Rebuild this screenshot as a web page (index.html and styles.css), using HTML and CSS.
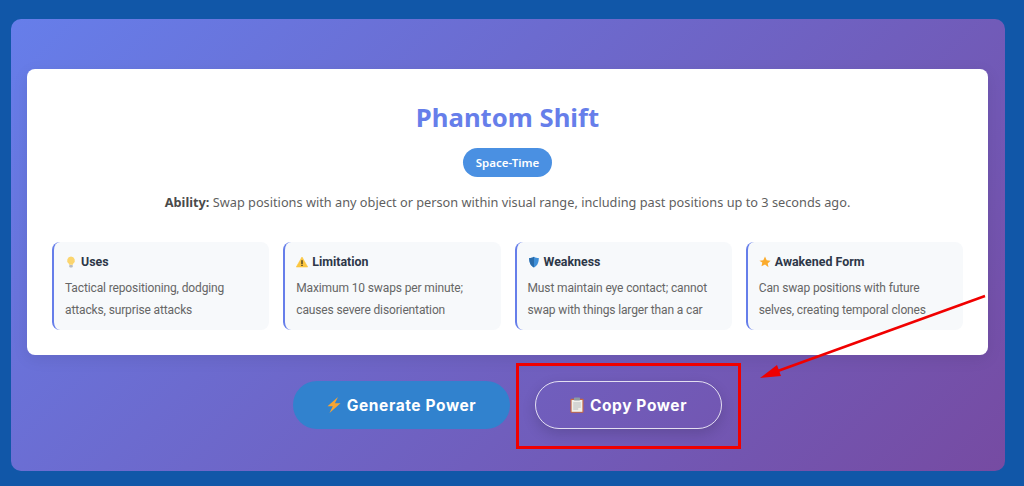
FILE: index.html
```html
<!DOCTYPE html>
<html lang="en">
<head>
<meta charset="utf-8">
<title>Phantom Shift</title>
<link rel="stylesheet" href="styles.css">
</head>
<body>
<main class="panel">
  <section class="power">
    <h1 class="name">Phantom Shift</h1>
    <span class="badge">Space-Time</span>
    <p class="ability"><strong>Ability:</strong> Swap positions with any object or person within visual range, including past positions up to 3 seconds ago.</p>
    <div class="details">
      <article class="detail">
        <h2><svg class="ico" viewBox="0 0 12 12"><path d="M6 .5a3.900 3.900 0 0 0-2.300 7l.4 1.300h3.800l.4-1.300A3.900 3.900 0 0 0 6 .5z" fill="#fbd56e"/><rect x="4.200" y="9" width="3.600" height="2.400" rx=".8" fill="#b9bcc0"/></svg>Uses</h2>
        <p>Tactical repositioning, dodging attacks, surprise attacks</p>
      </article>
      <article class="detail">
        <h2><svg class="ico" viewBox="0 0 12 12"><path d="M6 1 .3 11h11.400z" fill="#fcc63f" stroke="#fcc63f" stroke-linejoin="round" stroke-width=".6"/><rect x="5.400" y="4.200" width="1.200" height="3.900" fill="#2a2a22"/><rect x="5.400" y="8.800" width="1.200" height="1.200" fill="#2a2a22"/></svg>Limitation</h2>
        <p>Maximum 10 swaps per minute; causes severe disorientation</p>
      </article>
      <article class="detail">
        <h2><svg class="ico" viewBox="0 0 12 12"><path d="M6 .8c1.600 1 3 1.300 4.800 1.300 0 4.600-1.300 7.800-4.800 9.300C2.500 9.900 1.200 6.700 1.200 2.100 3 2.100 4.400 1.800 6 .8z" fill="#3f8fd8"/><path d="M6 .8v10.600C2.500 9.900 1.200 6.700 1.200 2.100 3 2.100 4.400 1.800 6 .8z" fill="#2a6cab"/></svg>Weakness</h2>
        <p>Must maintain eye contact; cannot swap with things larger than a car</p>
      </article>
      <article class="detail">
        <h2><svg class="ico" viewBox="0 0 12 12"><path d="m6 .6 1.700 3.600 3.900.5-2.900 2.700.8 3.900L6 8.400l-3.500 1.900.8-3.900L.4 4.700l3.900-.5z" fill="#fbab2c"/></svg>Awakened Form</h2>
        <p>Can swap positions with future selves, creating temporal clones</p>
      </article>
    </div>
  </section>
  <div class="actions">
    <button class="btn btn-primary"><svg class="btn-ico" viewBox="0 0 16 16"><path d="M12 0 1.500 9.300h5.300L3.500 16 14.500 6.300H8.900z" fill="#f6a534"/></svg>Generate Power</button>
    <button class="btn btn-outline"><svg class="btn-ico" viewBox="0 0 16 16"><rect x="1.500" y="1.800" width="13" height="14" rx=".8" fill="#c9683f"/><rect x="2.600" y="3" width="10.800" height="11.800" fill="#f1f0ea"/><rect x="5" y=".4" width="6" height="3" rx=".6" fill="#8d9aa3"/><path d="M4.200 6h7.600M4.200 8h7.600M4.200 10h7.600M4.200 12h5" stroke="#a9adb0" stroke-width=".8"/></svg>Copy Power</button>
  </div>
</main>
<div class="mark-box"></div>
<svg class="mark-arrow" viewBox="0 0 1024 486"><path d="M985 296 775 372" stroke="#f00000" stroke-width="2.500"/><path d="M760 378 777 365l4 11z" fill="#f00000"/></svg>
</body>
</html>
```
FILE: styles.css
```css
* { box-sizing: border-box; }
html, body { margin: 0; height: 486px; overflow: hidden; }
body {
  background: #1157a8;
  padding: 19px 19px 15px 11px;
  font-family: "Noto Sans", "Open Sans", sans-serif;
}
.panel {
  height: 452px;
  padding: 50px 17px 0 16px;
  border-radius: 10px;
  background: linear-gradient(135deg, #667eea 0%, #764ba2 100%);
}
.power {
  height: 286px;
  padding: 30px 25px 0;
  border-radius: 8px;
  background: #fff;
  box-shadow: 0 4px 16px rgba(0, 0, 0, .08);
  display: flex;
  flex-direction: column;
  align-items: center;
}
.name {
  margin: 0;
  font-size: 25.700px;
  line-height: 38px;
  font-weight: 700;
  color: #667eea;
}
.badge {
  margin-top: 11px;
  width: 89px;
  height: 29px;
  border-radius: 15px;
  background: #4a90e2;
  color: #fff;
  font-size: 11.500px;
  font-weight: 600;
  line-height: 29px;
  text-align: center;
}
.ability {
  margin: 14px 0 0;
  font-size: 12.750px;
  line-height: 22px;
  color: #5f5f5f;
}
.ability strong { color: #4a4a4a; }
.details {
  align-self: stretch;
  margin-top: 29px;
  display: grid;
  grid-template-columns: repeat(4, 1fr);
  gap: 14px;
}
.detail {
  height: 88px;
  padding: 10px 11px;
  border-left: 2px solid #667eea;
  border-radius: 8px;
  background: #f7f9fb;
}
.detail h2 {
  margin: 0 0 5px;
  display: flex;
  align-items: center;
  gap: 4px;
  font-family: Roboto, sans-serif;
  font-size: 12.400px;
  line-height: 20px;
  font-weight: 700;
  color: #2d3748;
}
.detail p {
  margin: 0;
  font-family: Roboto, sans-serif;
  font-size: 12px;
  letter-spacing: -.13px;
  line-height: 22px;
  color: #666;
}
.ico { width: 12px; height: 12px; flex: none; }
.actions {
  margin-top: 26px;
  display: flex;
  justify-content: center;
  gap: 25px;
  padding-right: 1px;
}
.btn {
  height: 48px;
  border-radius: 24px;
  display: flex;
  align-items: center;
  justify-content: center;
  gap: 5px;
  color: #fff;
  font-family: Inter, sans-serif;
  font-size: 15.500px;
  font-weight: 700;
  letter-spacing: .6px;
  border: 0;
}
.btn-ico { width: 16px; height: 16px; flex: none; }
.btn-primary { width: 217px; background: #3182ce; }
.btn-outline {
  width: 187px;
  background: transparent;
  border: 1px solid rgba(255, 255, 255, .8);
  box-shadow: 0 5px 14px rgba(0, 0, 0, .15);
}
.mark-box {
  position: absolute;
  left: 516px;
  top: 363px;
  width: 225px;
  height: 86px;
  border: 3px solid #f00000;
}
.mark-arrow {
  position: absolute;
  left: 0;
  top: 0;
  width: 1024px;
  height: 486px;
}
```
